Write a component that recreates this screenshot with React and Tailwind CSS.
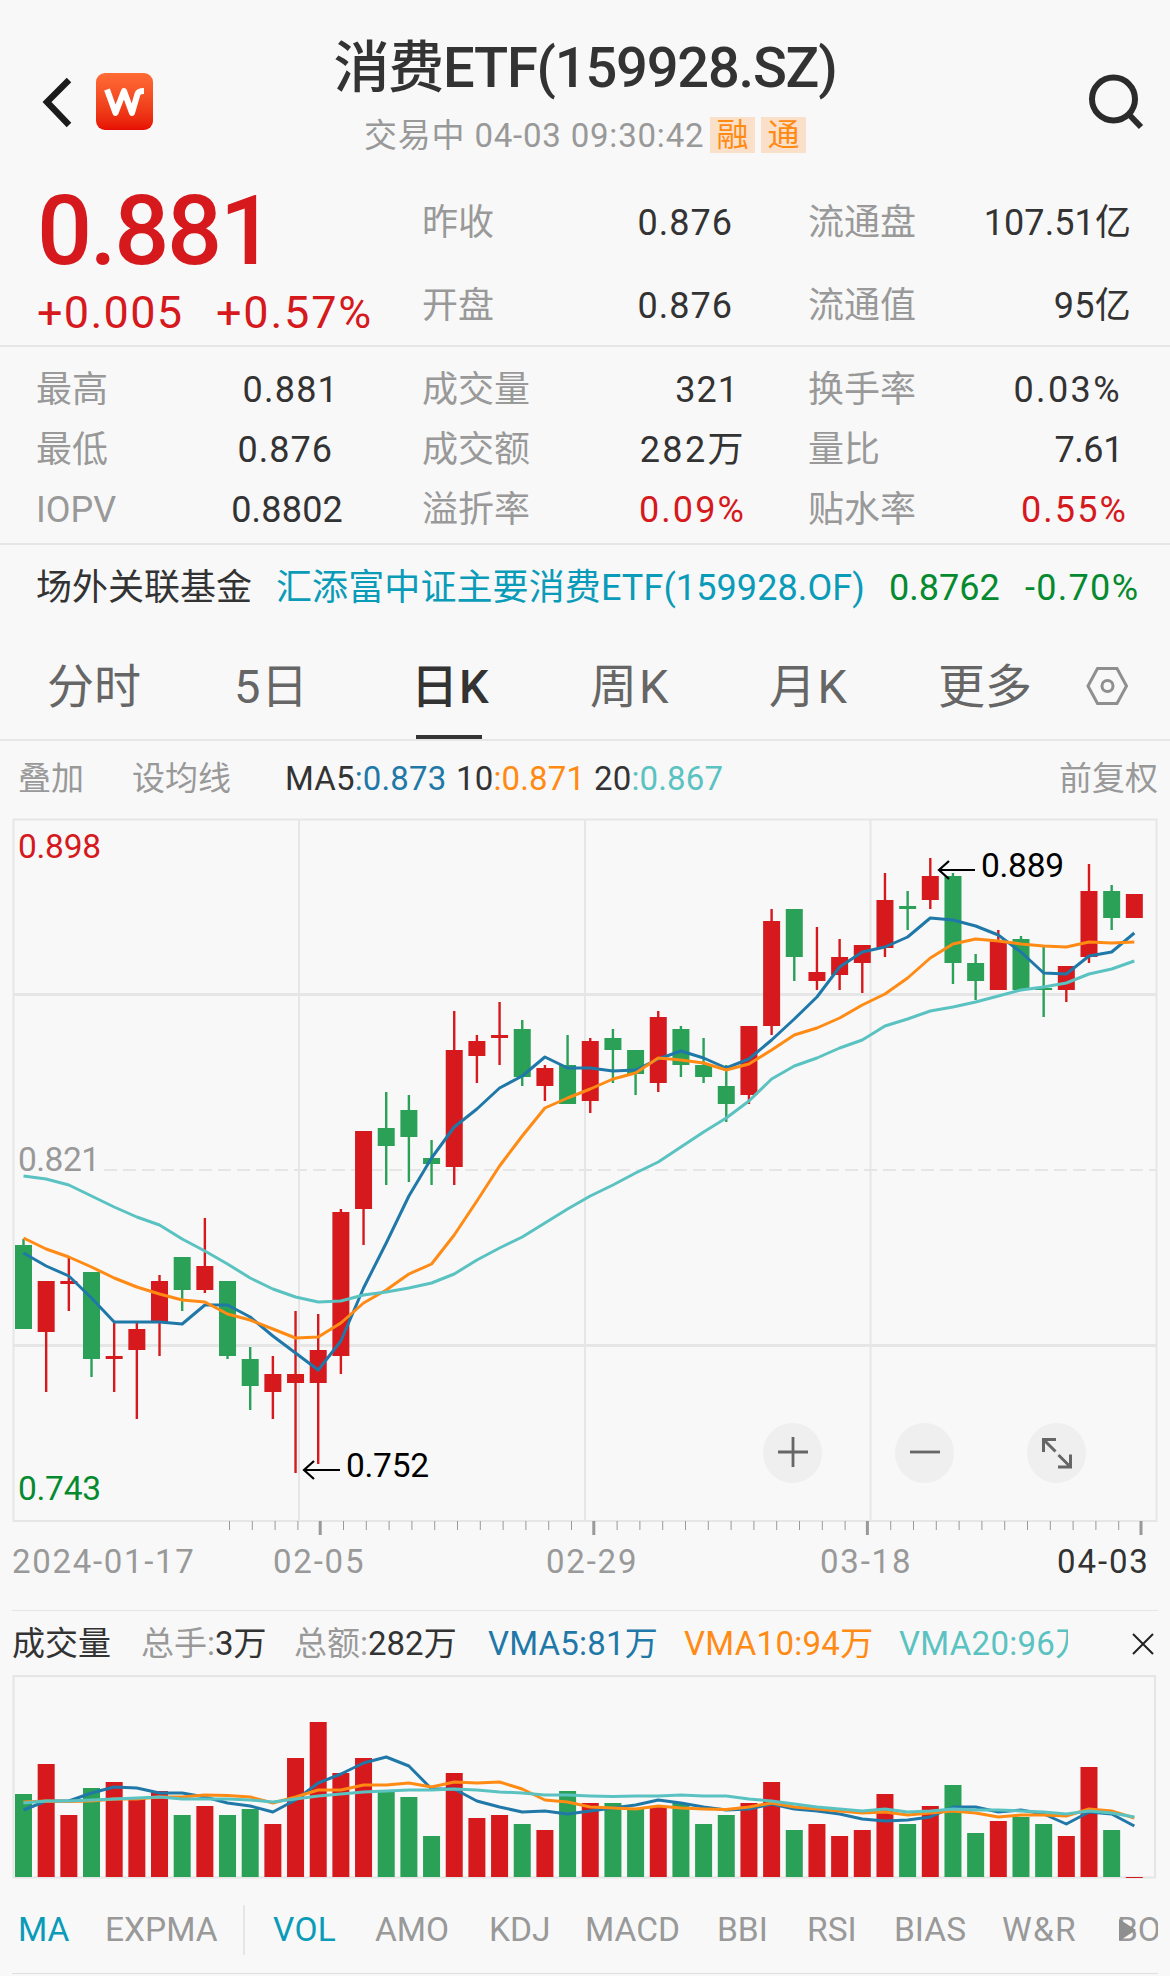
import React from "react";

const RED = "#d5191d";
const GREEN = "#2aa157";

const STEP = 22.67;
const FIRST_X = 23.5;

// [color, body top, body bottom, wick top, wick bottom]
const candles = [
  ["g", 1245, 1329, 1239, 1329],
  ["r", 1281, 1332, 1281, 1392],
  ["r", 1281, 1284, 1257, 1311],
  ["g", 1272, 1359, 1272, 1377],
  ["r", 1356, 1359, 1322, 1392],
  ["r", 1329, 1350, 1323, 1419],
  ["r", 1281, 1322, 1275, 1356],
  ["g", 1257, 1290, 1257, 1311],
  ["r", 1266, 1290, 1218, 1293],
  ["g", 1281, 1356, 1281, 1359],
  ["g", 1359, 1386, 1347, 1410],
  ["r", 1374, 1392, 1356, 1419],
  ["r", 1374, 1383, 1311, 1473],
  ["r", 1350, 1383, 1314, 1464],
  ["r", 1212, 1356, 1209, 1374],
  ["r", 1131, 1209, 1131, 1245],
  ["g", 1128, 1146, 1092, 1185],
  ["g", 1110, 1137, 1095, 1182],
  ["g", 1158, 1164, 1140, 1185],
  ["r", 1050, 1167, 1011, 1185],
  ["r", 1041, 1056, 1035, 1083],
  ["r", 1035, 1038, 1002, 1065],
  ["g", 1029, 1077, 1020, 1086],
  ["r", 1068, 1086, 1065, 1101],
  ["g", 1065, 1104, 1035, 1104],
  ["r", 1041, 1101, 1038, 1113],
  ["g", 1038, 1050, 1029, 1083],
  ["g", 1050, 1074, 1050, 1095],
  ["r", 1017, 1083, 1011, 1092],
  ["g", 1029, 1065, 1026, 1077],
  ["g", 1065, 1077, 1038, 1083],
  ["g", 1086, 1104, 1065, 1122],
  ["r", 1026, 1095, 1026, 1104],
  ["r", 921, 1026, 909, 1035],
  ["g", 909, 957, 909, 981],
  ["r", 972, 981, 927, 990],
  ["r", 957, 975, 939, 990],
  ["r", 945, 963, 945, 993],
  ["r", 900, 948, 873, 957],
  ["g", 906, 909, 891, 930],
  ["r", 876, 900, 858, 909],
  ["g", 876, 963, 873, 984],
  ["g", 963, 981, 954, 1000],
  ["r", 940, 990, 930, 990],
  ["g", 939, 990, 936, 990],
  ["g", 988, 990, 947, 1017],
  ["r", 966, 990, 966, 1002],
  ["r", 891, 957, 864, 963],
  ["g", 891, 918, 885, 930],
  ["r", 894, 918, 894, 918],
];

const ma5 = [
  1253, 1266, 1276, 1298, 1322, 1322, 1322, 1324, 1305, 1305, 1317, 1336, 1353,
  1370, 1341, 1288, 1243, 1196, 1158, 1127, 1109, 1088, 1076, 1057, 1068, 1068,
  1071, 1070, 1059, 1051, 1058, 1068, 1059, 1040, 1019, 997, 967, 952, 947, 937,
  918, 920, 926, 935, 952, 973, 974, 956, 952, 933,
];
const ma10 = [
  1238, 1249, 1257, 1267, 1278, 1287, 1294, 1300, 1302, 1314, 1320, 1329, 1338,
  1337, 1323, 1303, 1290, 1274, 1264, 1235, 1201, 1166, 1136, 1108, 1098, 1089,
  1079, 1073, 1058, 1060, 1063, 1070, 1064, 1050, 1035, 1028, 1018, 1005, 994,
  978, 958, 944, 939, 941, 944, 946, 947, 942, 943, 942,
];
const ma20 = [
  1176, 1179, 1185, 1196, 1207, 1217, 1225, 1239, 1251, 1264, 1278, 1289, 1297,
  1302, 1301, 1295, 1292, 1288, 1283, 1274, 1260, 1248, 1237, 1223, 1209, 1196,
  1185, 1173, 1162, 1147, 1132, 1118, 1101, 1079, 1066, 1058, 1048, 1040, 1026,
  1019, 1011, 1007, 1002, 996, 990, 987, 983, 974, 969, 961,
];

const volumes = [
  1794, 1764, 1815, 1788, 1782, 1799, 1791, 1815, 1806, 1815, 1809, 1824, 1758,
  1722, 1773, 1758, 1792, 1797, 1836, 1773, 1818, 1815, 1824, 1830, 1791, 1803,
  1803, 1809, 1806, 1803, 1824, 1815, 1803, 1782, 1830, 1824, 1836, 1830, 1794,
  1824, 1806, 1785, 1833, 1821, 1817, 1824, 1836, 1767, 1830, 1877,
];
const vma5 = [
  1810, 1801, 1801, 1793, 1787, 1788, 1793, 1793, 1797, 1803, 1806, 1812, 1800,
  1783, 1774, 1763, 1757, 1766, 1789, 1789, 1801, 1807, 1812, 1811, 1814, 1811,
  1808, 1805, 1800, 1803, 1807, 1810, 1809, 1804, 1809, 1811, 1814, 1819, 1821,
  1820, 1817, 1807, 1807, 1812, 1810, 1814, 1824, 1812, 1814, 1826,
];
const vma10 = [
  1802, 1801, 1801.5, 1801, 1799, 1799, 1797, 1797, 1795, 1795.5, 1797, 1803,
  1797, 1790, 1790, 1785, 1785, 1783, 1787, 1782, 1783, 1782, 1789, 1800, 1802,
  1807, 1808, 1809, 1806, 1808, 1809, 1809.5, 1807, 1803, 1807, 1809, 1811,
  1813, 1812, 1815, 1813, 1811, 1813, 1817, 1815, 1815, 1816, 1809, 1811, 1818,
];
const vma20 = [
  1803, 1801, 1801, 1800, 1799, 1798, 1797, 1799, 1799, 1799, 1800, 1802, 1799,
  1796, 1794, 1792, 1791, 1790, 1790, 1789, 1790, 1792, 1793, 1795, 1795, 1796,
  1796.5, 1796, 1796, 1795, 1796, 1796, 1799, 1801, 1804, 1807, 1809, 1811,
  1809, 1812, 1811, 1809, 1810, 1810, 1811, 1812, 1814, 1811, 1813, 1817,
];

const xAt = (i) => FIRST_X + i * STEP;
const toPoints = (values) => values.map((y, i) => `${xAt(i)},${y}`).join(" ");

const MaLine = ({ values, color }) => (
  <polyline
    points={toPoints(values)}
    fill="none"
    stroke={color}
    strokeWidth="3"
    strokeLinejoin="round"
  />
);

const Label = ({ x, y, width, color, children }) => (
  <text
    x={x}
    y={y}
    fill={color}
    fontSize="33.5"
    textLength={width}
    lengthAdjust="spacing"
  >
    {children}
  </text>
);

const Header = () => (
  <header className="h-[160px] grid grid-cols-[160px_1fr_160px]">
    <div className="flex items-center h-[203px] pl-[40px] self-start">
      <svg width="34" height="56" viewBox="0 0 34 56" fill="none">
        <path d="M29 6 L7 28 L29 51" stroke="#1b1b1b" strokeWidth="6.4" />
      </svg>
      <div className="ml-[22px] w-[57px] h-[57px] rounded-[9px] bg-linear-to-b from-[#ff6b35] to-[#e60b02]">
        <svg width="57" height="57" viewBox="0 0 57 57" fill="none">
          <path
            d="M11 16.5 L19.5 40 L28 18 L36 40 L41.5 21 Q42.5 18 48 18"
            stroke="#fff"
            strokeWidth="6"
            strokeLinejoin="round"
          />
        </svg>
      </div>
    </div>
    <div className="flex flex-col items-center">
      <h1 className="mt-[33px] text-[56px] leading-[70px] font-medium text-[#333] whitespace-nowrap tracking-[-1.2px]">
        消费ETF(159928.SZ)
      </h1>
      <div className="mt-[10px] flex items-center h-[44px] text-[33px] text-[#999] whitespace-nowrap">
        <span className="w-[346px] pt-[1px] tracking-[0.8px]">交易中 04-03 09:30:42</span>
        <span className="w-[45px] h-[36px] leading-[36px] text-center text-[32px] text-[#ff8a14] bg-[#fae0c8]">
          融
        </span>
        <span className="ml-[6px] w-[45px] h-[36px] leading-[36px] text-center text-[32px] text-[#ff8a14] bg-[#fae0c8]">
          通
        </span>
      </div>
    </div>
    <div className="flex items-center justify-end h-[204px] pr-[23px] self-start">
      <svg width="62" height="62" viewBox="0 0 62 62" fill="none">
        <g stroke="#2b2b2b" strokeWidth="6">
          <circle cx="28.5" cy="28" r="21.5" />
          <path d="M43.5 43 L56 56" />
        </g>
      </svg>
    </div>
  </header>
);

const Stat = ({ label, value, className }) => (
  <div className="flex items-center justify-between">
    <span className="text-[#999]">{label}</span>
    <span className={className}>{value}</span>
  </div>
);

const Quote = () => (
  <section className="h-[185px] flex text-[36px] text-[#333] whitespace-nowrap">
    <div className="w-[422px] pl-[37px] text-[#d5191d]">
      <div className="mt-[23px] h-[96px] leading-[96px] text-[97px] font-medium tracking-[-2.4px]">
        0.881
      </div>
      <div className="mt-[12px] h-[44px] leading-[44px] text-[45px] flex">
        <span className="w-[179px] tracking-[1.3px]">+0.005</span>
        <span className="tracking-[1.8px]">+0.57%</span>
      </div>
    </div>
    <div className="w-[748px] grid grid-cols-[386px_326px] grid-rows-[83px_83px] pt-[21px]">
      <Stat label="昨收" value="0.876" className="mr-[75px] tracking-[1px]" />
      <Stat label="流通盘" value="107.51亿" className="mr-[3px] tracking-[0.1px]" />
      <Stat label="开盘" value="0.876" className="mr-[75px] tracking-[1px]" />
      <Stat label="流通值" value="95亿" className="mr-[3px] tracking-[0.3px]" />
    </div>
  </section>
);

const Stats = () => (
  <section className="h-[196px] pt-[13px] pl-[36px] grid grid-cols-[386px_386px_326px] grid-rows-[60px_60px_60px] text-[36px] text-[#333] whitespace-nowrap">
    <Stat label="最高" value="0.881" className="mr-[83px] tracking-[1.2px]" />
    <Stat label="成交量" value="321" className="mr-[69px] tracking-[1px]" />
    <Stat label="换手率" value="0.03%" className="mr-[12px] tracking-[2.4px]" />
    <Stat label="最低" value="0.876" className="mr-[89px] tracking-[1px]" />
    <Stat label="成交额" value="282万" className="mr-[62px] tracking-[2.4px]" />
    <Stat label="量比" value="7.61" className="mr-[11px] tracking-[-0.4px]" />
    <Stat label="IOPV" value="0.8802" className="mr-[79px] tracking-[0.2px]" />
    <Stat
      label="溢折率"
      value="0.09%"
      className="mr-[62px] tracking-[2.1px] text-[#d5191d]"
    />
    <Stat
      label="贴水率"
      value="0.55%"
      className="mr-[6px] tracking-[2.1px] text-[#d5191d]"
    />
  </section>
);

const RelatedFund = () => (
  <section className="h-[84px] pt-[2px] pl-[36px] flex items-center text-[36px] whitespace-nowrap text-[#333]">
    <span className="w-[240px]">场外关联基金</span>
    <span className="w-[613px] text-[#0a9bb9] tracking-[0.1px]">
      汇添富中证主要消费ETF(159928.OF)
    </span>
    <span className="w-[136px] text-[#058a2f]">0.8762</span>
    <span className="text-[#058a2f] tracking-[1.3px]">-0.70%</span>
  </section>
);

const PeriodTabs = () => (
  <nav className="h-[110px] pt-[6px] pl-[47px] flex items-center text-[47px] text-[#666] whitespace-nowrap">
    <span className="w-[187px]">分时</span>
    <span className="w-[177px] tracking-[0.5px]">5日</span>
    <span className="w-[179px] h-full relative flex items-center font-medium text-[#333] tracking-[1px]">
      日K
      <i className="absolute left-[5px] bottom-0 w-[66px] h-[4px] bg-[#333]" />
    </span>
    <span className="w-[179px] tracking-[2px]">周K</span>
    <span className="w-[169px] tracking-[1.5px]">月K</span>
    <span className="w-[147px]">更多</span>
    <svg className="-mt-[2px]" width="44" height="44" viewBox="0 0 44 44" fill="none">
      <g stroke="#8f8f8f" strokeWidth="3">
        <path d="M12.5 4.5 H32 L41.5 22 L32 39.5 H12.5 L3 22 Z" />
        <circle cx="22.5" cy="22" r="5.5" />
      </g>
    </svg>
  </nav>
);

const MaLegend = () => (
  <div className="h-[74px] pt-[1px] pl-[18px] pr-[12px] flex items-center text-[33px] text-[#333] whitespace-nowrap">
    <span className="w-[114px] text-[#999]">叠加</span>
    <span className="w-[153px] text-[#999]">设均线</span>
    <span className="w-[171px] tracking-[0.15px]">
      MA5<span className="text-[#1f78a8]">:0.873</span>
    </span>
    <span className="w-[138px] tracking-[0.15px]">
      10<span className="text-[#ff8a14]">:0.871</span>
    </span>
    <span className="tracking-[0.15px]">
      20<span className="text-[#5bc2c2]">:0.867</span>
    </span>
    <span className="ml-auto text-[#999]">前复权</span>
  </div>
);

const KLineChart = () => (
  <section className="relative">
    <svg width="1170" height="725" viewBox="0 815 1170 725" className="block">
      <g stroke="#e6e6e6" fill="none">
        <rect x="13.5" y="819.5" width="1143" height="701.5" strokeWidth="2" />
        <path d="M299 820 V1521 M585 820 V1521 M870.5 820 V1521" strokeWidth="2" />
        <path d="M13 994.5 H1157 M13 1345.5 H1157" strokeWidth="3" />
        <path d="M104 1170 H1157" strokeWidth="2" strokeDasharray="13 6" />
      </g>
      {Array.from({ length: 41 }, (_, i) => {
        const major = [4, 16, 28, 40].includes(i);
        return (
          <rect
            key={i}
            x={229 + i * 22.8 - (major ? 1.5 : 0)}
            y="1521"
            width={major ? 3 : 1}
            height={major ? 14 : 9}
            fill="#999"
          />
        );
      })}
      {candles.map(([c, top, bottom, high, low], i) => (
        <g key={i} fill={c === "r" ? RED : GREEN}>
          <rect x={xAt(i) - 1.2} y={high} width="2.4" height={low - high} />
          <rect x={xAt(i) - 8.5} y={top} width="17" height={bottom - top} />
        </g>
      ))}
      <MaLine values={ma5} color="#1f78a8" />
      <MaLine values={ma10} color="#ff8a14" />
      <MaLine values={ma20} color="#5bc2c2" />
      <Label x={18} y={858} width={83} color={RED}>0.898</Label>
      <Label x={18} y={1171} width={82} color="#999">0.821</Label>
      <Label x={18} y={1500} width={83} color="#058a2f">0.743</Label>
      <g stroke="#000" strokeWidth="2.2" fill="none">
        <path d="M975 870 H939 M949 861 L939 870 L949 879" />
        <path d="M340 1470 H304 M314 1461 L304 1470 L314 1479" />
      </g>
      <Label x={981} y={877} width={83} color="#000">0.889</Label>
      <Label x={346} y={1477} width={83} color="#000">0.752</Label>
    </svg>

    <div className="absolute left-[763px] top-[608px] flex gap-[73px]">
      <button className="w-[59px] h-[60px] rounded-full bg-[#efefef] flex items-center justify-center">
        <svg width="40" height="40" viewBox="0 0 40 40" stroke="#666" strokeWidth="2.8">
          <path d="M5 19 H35 M20 4 V34" />
        </svg>
      </button>
      <button className="w-[59px] h-[60px] rounded-full bg-[#efefef] flex items-center justify-center">
        <svg width="40" height="40" viewBox="0 0 40 40" stroke="#666" strokeWidth="2.8">
          <path d="M5 19 H35" />
        </svg>
      </button>
      <button className="w-[59px] h-[60px] rounded-full bg-[#efefef] flex items-center justify-center">
        <svg width="40" height="40" viewBox="0 0 40 40" fill="none" stroke="#666" strokeWidth="3">
          <path d="M19 6.5 H6.5 V19 M7 7 L18.5 18.5" />
          <path d="M21 34 H33.5 V21.5 M33 33.5 L21.5 22" />
        </svg>
      </button>
    </div>

    <div className="h-[44px] mb-[26px] pl-[12px] flex items-center text-[33px] text-[#999] whitespace-nowrap">
      <span className="w-[261px] tracking-[1.7px]">2024-01-17</span>
      <span className="w-[273px] tracking-[1.8px]">02-05</span>
      <span className="w-[274px] tracking-[1.8px]">02-29</span>
      <span className="w-[237px] tracking-[1.8px]">03-18</span>
      <span className="text-[#333] tracking-[1.9px]">04-03</span>
    </div>
  </section>
);

const VolumeLegend = () => (
  <div className="h-[64px] pt-[2px] pl-[12px] flex items-center text-[33px] text-[#333] whitespace-nowrap">
    <span className="w-[129px]">成交量</span>
    <span className="w-[153px]">
      <span className="text-[#999]">总手:</span>3万
    </span>
    <span className="w-[194px]">
      <span className="text-[#999]">总额:</span>282万
    </span>
    <span className="w-[196px] text-[#1f78a8] tracking-[0.2px]">VMA5:81万</span>
    <span className="w-[215px] text-[#ff8a14] tracking-[0.3px]">VMA10:94万</span>
    <span className="w-[169px] overflow-hidden text-[#5bc2c2] tracking-[0.3px]">VMA20:96万</span>
    <svg className="ml-[62px]" width="26" height="26" viewBox="0 0 26 26">
      <path d="M3 3 L23 23 M23 3 L3 23" stroke="#222" strokeWidth="2" />
    </svg>
  </div>
);

const VolumeChart = () => (
  <svg width="1170" height="210" viewBox="0 1675 1170 210" className="block">
    <rect x="13.5" y="1676" width="1141.5" height="201.5" fill="none" stroke="#e6e6e6" strokeWidth="2.2" />
    {volumes.map((top, i) => (
      <rect
        key={i}
        x={xAt(i) - 8.5}
        y={top}
        width="17"
        height={Math.max(1877 - top, 1)}
        fill={candles[i][0] === "r" ? RED : GREEN}
      />
    ))}
    <MaLine values={vma5} color="#1f78a8" />
    <MaLine values={vma10} color="#ff8a14" />
    <MaLine values={vma20} color="#5bc2c2" />
  </svg>
);

const IndicatorTabs = () => (
  <nav className="h-[88px] pt-[2px] w-[1158px] overflow-hidden pl-[18px] flex items-center text-[33.5px] text-[#999] whitespace-nowrap">
    <span className="w-[87px] shrink-0 text-[#0a9bb9]">MA</span>
    <span className="w-[138px] shrink-0">EXPMA</span>
    <i className="w-[2px] h-[50px] shrink-0 bg-[#e6e6e6]" />
    <div className="pl-[28px] flex items-center">
      <span className="w-[102px] shrink-0 text-[#0a9bb9] tracking-[0.3px]">VOL</span>
      <span className="w-[114px] shrink-0">AMO</span>
      <span className="w-[96px] shrink-0">KDJ</span>
      <span className="w-[132px] shrink-0">MACD</span>
      <span className="w-[90px] shrink-0">BBI</span>
      <span className="w-[87px] shrink-0">RSI</span>
      <span className="w-[108px] shrink-0">BIAS</span>
      <span className="w-[115px] shrink-0 tracking-[1.2px]">W&amp;R</span>
      <span className="shrink-0 relative">
        BOLL
        <svg className="absolute left-[2px] top-[14px]" width="18" height="22" viewBox="0 0 18 22">
          <path d="M0 0 L17 11 L0 22 Z" fill="#8f8f8f" />
        </svg>
      </span>
    </div>
  </nav>
);

const App = () => {
  return (
    <div className="w-[1170px] h-[1976px] overflow-hidden bg-[#f8f8f8] font-[Roboto,'Noto_Sans_CJK_SC',sans-serif]">
      <Header />
      <Quote />
      <div className="h-[2px] bg-[#e6e6e6]" />
      <Stats />
      <div className="h-[2px] bg-[#e6e6e6]" />
      <RelatedFund />
      <PeriodTabs />
      <div className="h-[2px] bg-[#e6e6e6]" />
      <MaLegend />
      <KLineChart />
      <div className="h-px mx-[12px] bg-[#e6e6e6]" />
      <VolumeLegend />
      <VolumeChart />
      <IndicatorTabs />
      <div className="h-px mx-[12px] bg-[#e0e0e0]" />
    </div>
  );
};

export default App;
